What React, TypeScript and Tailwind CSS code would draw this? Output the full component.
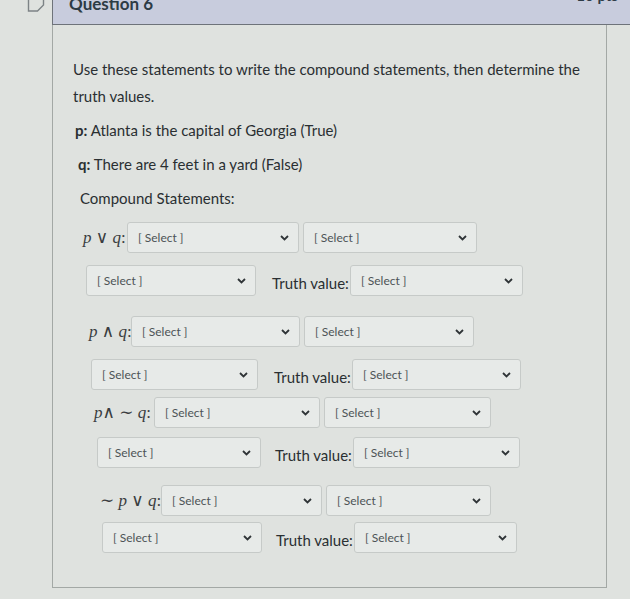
const ROWS = [
  {
    key: 'or',
    top: { mt: 'mt-[10px]', ml: 'ml-[30px]', lw: 'w-[44px]', s1: 'w-[172px]', s2: 'w-[174px]' },
    bottom: { mt: 'mt-[12px]', ml: 'ml-[33px]', s1: 'w-[170px]', gap: 'ml-[16px]', s2: 'w-[173px]' },
    expr: (
      <>
        <i>p</i> ∨ <i>q</i>:
      </>
    ),
  },
  {
    key: 'and',
    top: { mt: 'mt-[20px]', ml: 'ml-[36px]', lw: 'w-[42px]', s1: 'w-[169px]', s2: 'w-[170px]' },
    bottom: { mt: 'mt-[12px]', ml: 'ml-[38px]', s1: 'w-[167px]', gap: 'ml-[16px]', s2: 'w-[169px]' },
    expr: (
      <>
        <i>p</i> ∧ <i>q</i>:
      </>
    ),
  },
  {
    key: 'and-not',
    top: { mt: 'mt-[7px]', ml: 'ml-[41px]', lw: 'w-[60px]', s1: 'w-[166px]', s2: 'w-[167px]' },
    bottom: { mt: 'mt-[9px]', ml: 'ml-[44px]', s1: 'w-[164px]', gap: 'ml-[14px]', s2: 'w-[167px]' },
    expr: (
      <>
        <i>p</i>∧ ∼ <i>q</i>:
      </>
    ),
  },
  {
    key: 'not-or',
    top: { mt: 'mt-[17px]', ml: 'ml-[47px]', lw: 'w-[61px]', s1: 'w-[161px]', s2: 'w-[165px]' },
    bottom: { mt: 'mt-[6px]', ml: 'ml-[49px]', s1: 'w-[160px]', gap: 'ml-[14px]', s2: 'w-[163px]' },
    expr: (
      <>
        ∼ <i>p</i> ∨ <i>q</i>:
      </>
    ),
  },
];

function Chevron() {
  return (
    <svg width="9" height="6" viewBox="0 0 9 6" className="shrink-0">
      <path d="M1 1l3.5 3.5L8 1" fill="none" stroke="#2f3437" strokeWidth="1.8" />
    </svg>
  );
}

function Select({ w }: { w: string }) {
  return (
    <div
      className={`${w} h-[31px] shrink-0 flex items-center justify-between pl-[10px] pr-[9px]
                  bg-[#e7eae8] border border-[#c6cac8] rounded-[3px]`}>
      <span className="text-[12px] text-[#4d5356] leading-none">[ Select ]</span>
      <Chevron />
    </div>
  );
}

export default function App() {
  return (
    <div
      className="w-[630px] h-[599px] overflow-hidden flex bg-[#dfe2df] text-[#2a2f32]"
      style={{ fontFamily: 'Lato, "Open Sans", sans-serif' }}>

      {/* gutter with bookmark flag */}
      <div className="w-[52px] shrink-0">
        <svg width="18" height="14" viewBox="0 0 18 14" className="ml-[27px] -mt-[1px]">
          <path d="M1.5 0v12h9l6-6V0" fill="none" stroke="#7d8386" strokeWidth="1.4" />
        </svg>
      </div>

      <div className="flex-1 flex flex-col">
        {/* header */}
        <div className="h-[25px] shrink-0 flex justify-between bg-[#c8ccdd] border-l border-b border-[#6e737a]">
          <span className="block pl-[16px] -mt-[5px] text-[17px] leading-[17px] font-bold text-[#2d3b45]">
            Question 6
          </span>
          <span className="block pr-[12px] -mt-[12px] text-[15px] leading-[15px] font-bold text-[#2d3b45]">
            10 pts
          </span>
        </div>

        {/* body */}
        <div className="w-[555px] h-[563px] flex flex-col border-l border-r border-b border-[#a3a8a5] text-[15px]">
          <p className="mt-[31px] ml-[20px] mr-[10px] leading-[27px]">
            Use these statements to write the compound statements, then determine the truth values.
          </p>
          <p className="mt-[7px] ml-[22px] leading-[27px]">
            <b>p:</b> Atlanta is the capital of Georgia (True)
          </p>
          <p className="mt-[7px] ml-[25px] leading-[27px]">
            <b>q:</b> There are 4 feet in a yard (False)
          </p>
          <p className="mt-[7px] ml-[27px] leading-[27px]">Compound Statements:</p>

          {ROWS.map(({ key, top, bottom, expr }) => (
            <div key={key}>
              <div className={`${top.mt} ${top.ml} flex items-center`}>
                <span
                  className={`${top.lw} shrink-0 text-[17px] text-[#3a3d40] whitespace-nowrap`}
                  style={{ fontFamily: '"Liberation Serif", "DejaVu Serif", serif' }}>
                  {expr}
                </span>
                <Select w={top.s1} />
                <div className="w-[4px] shrink-0" />
                <Select w={top.s2} />
              </div>
              <div className={`${bottom.mt} ${bottom.ml} flex items-center`}>
                <Select w={bottom.s1} />
                <span className={`${bottom.gap} mt-[5px] w-[78px] shrink-0 text-[15px] whitespace-nowrap`}>
                  Truth value:
                </span>
                <Select w={bottom.s2} />
              </div>
            </div>
          ))}
        </div>
      </div>
    </div>
  );
}
